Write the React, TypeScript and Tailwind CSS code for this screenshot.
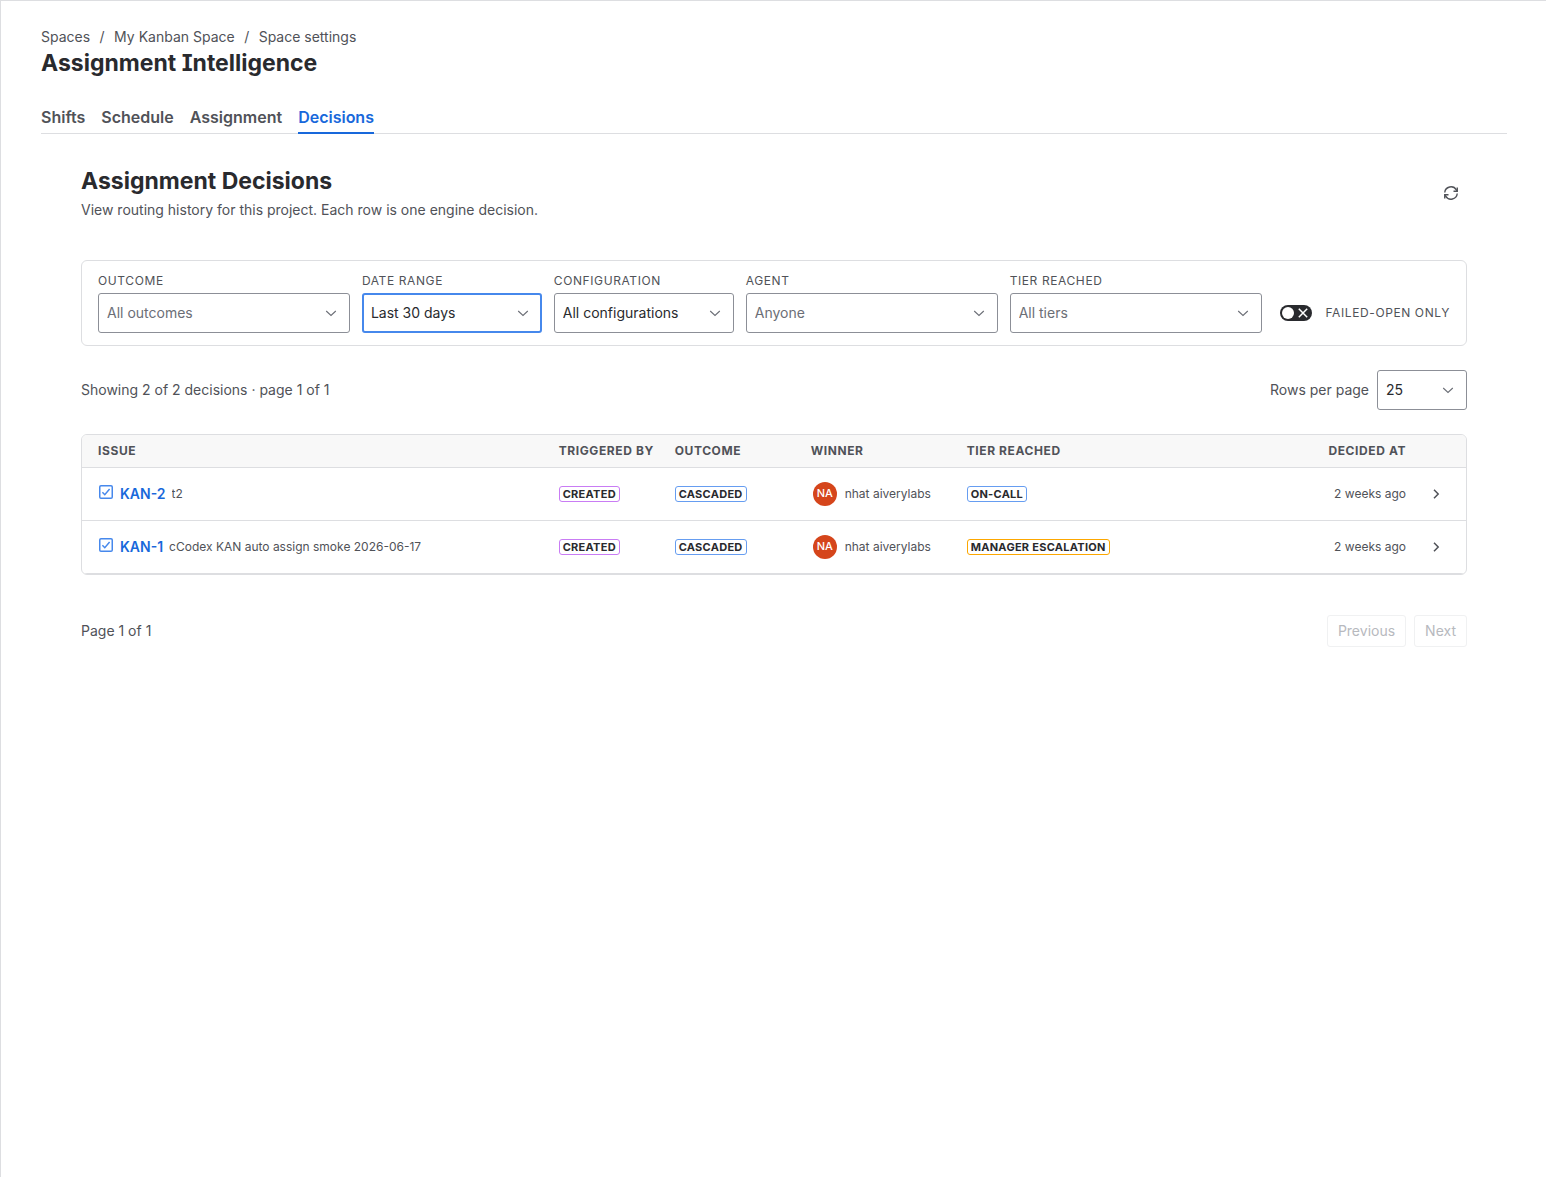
import { useState } from 'react'
import clsx from 'clsx'

const tabs = ['Shifts', 'Schedule', 'Assignment', 'Decisions']

const filters = [
    { id: 'outcome', label: 'Outcome', placeholder: true, width: 'w-[252px]', options: ['All outcomes', 'Assigned', 'Cascaded'] },
    { id: 'range', label: 'Date range', placeholder: false, width: 'w-[180px]', options: ['Last 30 days', 'Last 7 days', 'Last 24 hours'] },
    { id: 'configuration', label: 'Configuration', placeholder: false, width: 'w-[180px]', options: ['All configurations'] },
    { id: 'agent', label: 'Agent', placeholder: true, width: 'w-[252px]', options: ['Anyone', 'nhat aiverylabs'] },
    { id: 'tier', label: 'Tier reached', placeholder: true, width: 'w-[252px]', options: ['All tiers', 'On-call', 'Manager escalation'] },
]

const decisions = [
    {
        key: 'KAN-2',
        summary: 't2',
        trigger: 'Created',
        outcome: 'Cascaded',
        winner: 'nhat aiverylabs',
        tier: 'On-call',
        tierBorder: 'border-[#669df1]',
        decidedAt: '2 weeks ago',
    },
    {
        key: 'KAN-1',
        summary: 'cCodex KAN auto assign smoke 2026-06-17',
        trigger: 'Created',
        outcome: 'Cascaded',
        winner: 'nhat aiverylabs',
        tier: 'Manager escalation',
        tierBorder: 'border-[#fca700]',
        decidedAt: '2 weeks ago',
    },
]

function ChevronDown() {
    return (
        <svg viewBox="0 0 12 12" className="pointer-events-none absolute right-[13px] top-1/2 size-3 -translate-y-1/2" fill="none" stroke="#6b6e76" strokeWidth="1.1" aria-hidden="true">
            <path d="M1.2 4 6 8.4 10.8 4" />
        </svg>
    )
}

function ChevronRight() {
    return (
        <svg viewBox="0 0 12 12" className="size-3" fill="none" stroke="#505258" strokeWidth="1.5" aria-hidden="true">
            <path d="m4 1.8 4.2 4.2L4 10.2" />
        </svg>
    )
}

function RefreshIcon() {
    return (
        <svg viewBox="0 0 16 16" className="size-4" fill="none" stroke="#505258" strokeWidth="1.4" aria-hidden="true">
            <path d="M1.75 7.5a6.25 6.25 0 0 1 11.6-2.6l.9 1.35" />
            <path d="M14.25 2.5v3.75H10.5" />
            <path d="M14.25 8.5a6.25 6.25 0 0 1-11.6 2.6l-.9-1.35" />
            <path d="M1.75 13.5V9.75H5.5" />
        </svg>
    )
}

function TaskIcon() {
    return (
        <svg viewBox="0 0 16 16" className="size-4" fill="none" stroke="#4688ec" strokeWidth="1.5" aria-hidden="true">
            <rect x="1.75" y="1.75" width="12.5" height="12.5" rx="1.25" />
            <path d="m4.4 8.2 2.4 2.5 4.8-5.6" />
        </svg>
    )
}

function Lozenge({ border, children }: { border: string; children: string }) {
    return (
        <span className={clsx('inline-flex h-4 items-center rounded-[3px] border px-[3px] text-[11px]/[14px] font-bold uppercase tracking-wide text-[#292a2e]', border)}>
            {children}
        </span>
    )
}

function Filter({ filter }: { filter: (typeof filters)[number] }) {
    const focused = filter.id === 'range'
    return (
        <div className={clsx('flex flex-col gap-1', filter.width)}>
            <label htmlFor={filter.id} className="text-xs uppercase tracking-wider text-[#505258]">{filter.label}</label>
            <div className="relative">
                <select
                    id={filter.id}
                    className={clsx(
                        'h-10 w-full appearance-none rounded-[3px] bg-white text-sm outline-none',
                        focused ? 'border-2 border-[#4688ec] px-[7px]' : 'border border-[#8c8f97] px-2',
                        filter.placeholder ? 'text-[#6b6e76]' : 'text-[#292a2e]',
                    )}
                >
                    {filter.options.map((option) => (
                        <option key={option}>{option}</option>
                    ))}
                </select>
                <ChevronDown />
            </div>
        </div>
    )
}

function FailedOpenToggle() {
    const [on, setOn] = useState(false)
    return (
        <label className="ml-1.5 flex h-10 shrink-0 items-center gap-3.5 text-xs uppercase tracking-wider text-[#505258]">
            <input type="checkbox" role="switch" checked={on} onChange={() => setOn(!on)} className="sr-only" />
            <span className={clsx('flex h-4 w-8 items-center justify-between rounded-full px-0.5', on ? 'flex-row-reverse bg-[#5b7f24]' : 'bg-[#292a2e]')}>
                <span className="size-3 rounded-full bg-white" />
                <svg viewBox="0 0 12 12" className="mr-px size-3" fill="none" stroke="white" strokeWidth="1.5" aria-hidden="true">
                    <path d="m1.8 1.8 8.4 8.4m0-8.4-8.4 8.4" />
                </svg>
            </span>
            Failed-open only
        </label>
    )
}

function DecisionsTable() {
    return (
        <div className="mt-6 overflow-hidden rounded-md border border-[#dddee1]">
            <table className="w-full table-fixed text-left text-xs text-[#505258]">
                <colgroup>
                    <col />
                    <col className="w-[116px]" />
                    <col className="w-[136px]" />
                    <col className="w-[156px]" />
                    <col className="w-[23%]" />
                    <col className="w-[137px]" />
                    <col className="w-[52px]" />
                </colgroup>
                <thead>
                    <tr className="h-8 border-b border-[#dddee1] bg-[#f8f8f8] uppercase tracking-wider">
                        <th className="pl-4 font-bold">Issue</th>
                        <th className="whitespace-nowrap pl-2 font-bold">Triggered by</th>
                        <th className="px-2 font-bold">Outcome</th>
                        <th className="px-2 font-bold">Winner</th>
                        <th className="px-2 font-bold">Tier reached</th>
                        <th className="px-2 text-right font-bold">Decided at</th>
                        <th aria-label="Details" />
                    </tr>
                </thead>
                <tbody>
                    {decisions.map((decision) => (
                        <tr key={decision.key} className="h-[53px] border-b border-[#dddee1]">
                            <td className="pl-4">
                                <div className="flex items-center gap-1.5">
                                    <span className="pb-1"><TaskIcon /></span>
                                    <a href={`#${decision.key}`} className="text-sm font-semibold text-[#1868db]">{decision.key}</a>
                                    <span className="truncate">{decision.summary}</span>
                                </div>
                            </td>
                            <td className="px-2">
                                <div className="flex"><Lozenge border="border-[#c97cf4]">{decision.trigger}</Lozenge></div>
                            </td>
                            <td className="px-2">
                                <div className="flex"><Lozenge border="border-[#669df1]">{decision.outcome}</Lozenge></div>
                            </td>
                            <td className="pl-2.5">
                                <div className="flex items-center gap-2 whitespace-nowrap">
                                    <span className="flex size-6 items-center justify-center rounded-full bg-[#d5451b] text-[11px] font-medium text-white">NA</span>
                                    {decision.winner}
                                </div>
                            </td>
                            <td className="px-2">
                                <div className="flex"><Lozenge border={decision.tierBorder}>{decision.tier}</Lozenge></div>
                            </td>
                            <td className="px-2 text-right">{decision.decidedAt}</td>
                            <td className="pl-2">
                                <button type="button" aria-label={`Open ${decision.key}`} className="flex size-7 items-center justify-center">
                                    <ChevronRight />
                                </button>
                            </td>
                        </tr>
                    ))}
                </tbody>
            </table>
        </div>
    )
}

function App() {
    return (
        <div className="min-h-screen border-l border-t border-[#dddee1] bg-white pl-10 pr-[39px] pt-6 font-['Inter',sans-serif] text-sm text-[#505258]">
            <nav aria-label="Breadcrumb" className="flex h-6 items-center">
                <a href="#spaces">Spaces</a>
                <span className="w-6 text-center">/</span>
                <a href="#space">My Kanban Space</a>
                <span className="w-6 text-center">/</span>
                <a href="#settings">Space settings</a>
            </nav>
            <h1 className="text-[23px]/7 font-bold text-[#292a2e] [font-feature-settings:'cv08']">Assignment Intelligence</h1>

            <nav aria-label="Sections" className="mt-6 flex h-[33px] gap-4 border-b border-[#dddee1] text-base/8 font-semibold">
                {tabs.map((tab) => (
                    <a
                        key={tab}
                        href={`#${tab.toLowerCase()}`}
                        className={clsx('h-[33px]', tab === 'Decisions' && 'border-b-2 border-[#1868db] text-[#1868db]')}
                    >
                        {tab}
                    </a>
                ))}
            </nav>

            <main className="px-10 pt-8">
                <header className="flex items-center justify-between">
                    <div>
                        <h2 className="text-[23px]/[30px] font-bold text-[#292a2e]">Assignment Decisions</h2>
                        <p className="mt-1">View routing history for this project. Each row is one engine decision.</p>
                    </div>
                    <button type="button" aria-label="Refresh" className="flex size-8 items-center justify-center">
                        <RefreshIcon />
                    </button>
                </header>

                <section className="mt-10 flex flex-wrap items-end gap-3 rounded-md border border-[#dddee1] px-4 py-3 2xl:flex-nowrap">
                    {filters.map((filter) => (
                        <Filter key={filter.id} filter={filter} />
                    ))}
                    <FailedOpenToggle />
                </section>

                <div className="mt-6 flex items-center justify-between">
                    <p>Showing 2 of 2 decisions · page 1 of 1</p>
                    <div className="flex items-center gap-2">
                        <label htmlFor="rows">Rows per page</label>
                        <div className="relative">
                            <select id="rows" className="h-10 w-[90px] appearance-none rounded-[3px] border border-[#8c8f97] bg-white px-2 text-sm text-[#292a2e]">
                                <option>25</option>
                                <option>50</option>
                                <option>100</option>
                            </select>
                            <ChevronDown />
                        </div>
                    </div>
                </div>

                <DecisionsTable />

                <footer className="mt-10 flex items-center justify-between">
                    <p>Page 1 of 1</p>
                    <div className="flex gap-2 text-[#b7b9be]">
                        <button type="button" disabled className="h-8 rounded-[3px] border border-[#f0f1f2] px-2.5">Previous</button>
                        <button type="button" disabled className="h-8 rounded-[3px] border border-[#f0f1f2] px-2.5">Next</button>
                    </div>
                </footer>
            </main>
        </div>
    )
}

export default App
